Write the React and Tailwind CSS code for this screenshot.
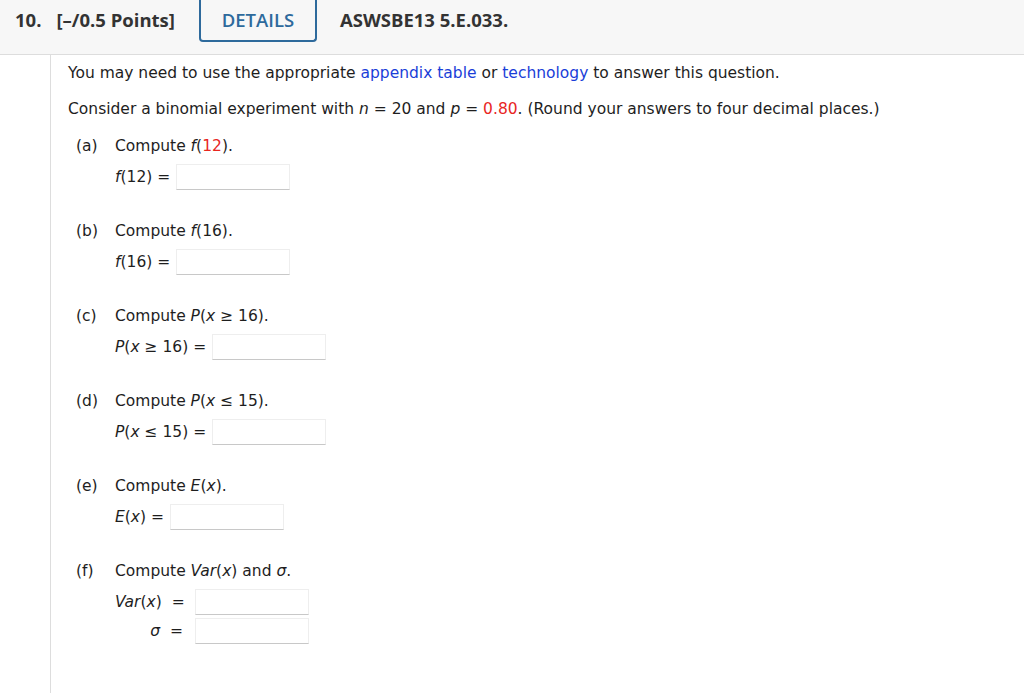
import React from "react";

const parts = [
  {
    key: "a",
    q: (
      <>
        Compute <i>f</i>(<span className="text-[#e8261f]">12</span>).
      </>
    ),
    answers: [{ label: <><i>f</i>(12) =</> }],
  },
  {
    key: "b",
    q: (
      <>
        Compute <i>f</i>(16).
      </>
    ),
    answers: [{ label: <><i>f</i>(16) =</> }],
  },
  {
    key: "c",
    q: (
      <>
        Compute <i>P</i>(<i>x</i> ≥ 16).
      </>
    ),
    answers: [{ label: <><i>P</i>(<i>x</i> ≥ 16) =</> }],
  },
  {
    key: "d",
    q: (
      <>
        Compute <i>P</i>(<i>x</i> ≤ 15).
      </>
    ),
    answers: [{ label: <><i>P</i>(<i>x</i> ≤ 15) =</> }],
  },
  {
    key: "e",
    q: (
      <>
        Compute <i>E</i>(<i>x</i>).
      </>
    ),
    answers: [{ label: <><i>E</i>(<i>x</i>) =</> }],
  },
  {
    key: "f",
    q: (
      <>
        Compute <i>Var</i>(<i>x</i>) and <i>σ</i>.
      </>
    ),
    answers: [
      { label: <><i>Var</i>(<i>x</i>) &nbsp;=</>, fixed: true },
      { label: <><i>σ</i> &nbsp;=</>, fixed: true },
    ],
  },
];

const AnswerBox = () => (
  <div className="w-[114px] h-[26px] bg-white border border-[#eeeeee] border-b-[#c8c8c8]" />
);

const App = () => {
  return (
    <div className="w-[1024px] h-[693px] bg-white overflow-hidden">
      <div className="h-[55px] bg-[#f7f7f7] border-b border-[#dddddd] flex items-start font-['Open_Sans',sans-serif] font-bold text-[18.5px] leading-[28px] text-[#333333]">
        <span className="ml-[15px] mt-[6px]">10.</span>
        <span className="ml-[15px] mt-[6px]">[–/0.5 Points]</span>
        <div className="ml-[24px] w-[118px] h-[43px] -mt-[1px] border-2 border-t-0 border-[#2e6a9c] rounded-b-[4px] flex items-center justify-center pt-[1px] text-[#2e6a9c] font-semibold text-[18.5px]">
          DETAILS
        </div>
        <span className="ml-[23px] mt-[6px]">ASWSBE13 5.E.033.</span>
      </div>
      <div className="flex h-[638px]">
        <div className="w-[51px] border-r border-[#dddddd]" />
        <div className="pl-[17px] pt-[8px] font-['DejaVu_Sans',Verdana,sans-serif] text-[15.5px] text-[#1e1e1e] leading-[20px]">
          <p>
            You may need to use the appropriate{" "}
            <span className="text-[#1a3ed8]">appendix table</span> or{" "}
            <span className="text-[#1a3ed8]">technology</span> to answer this question.
          </p>
          <p className="mt-[16px]">
            Consider a binomial experiment with <i>n</i> = 20 and <i>p</i> ={" "}
            <span className="text-[#e8261f]">0.80</span>. (Round your answers to four decimal places.)
          </p>
          <div className="mt-[17px] flex flex-col gap-[31px]">
            {parts.map((p) => (
              <div key={p.key} className="flex">
                <span className="w-[47px] pl-[8px]">({p.key})</span>
                <div>
                  <p>{p.q}</p>
                  <div className="mt-[8px] flex flex-col gap-[3px]">
                    {p.answers.map((a, i) => (
                      <div key={i} className="flex items-center">
                        <span
                          className={
                            a.fixed
                              ? "w-[80px] text-right whitespace-nowrap pr-[12px]"
                              : "whitespace-nowrap mr-[6px]"
                          }
                        >
                          {a.label}
                        </span>
                        <AnswerBox />
                      </div>
                    ))}
                  </div>
                </div>
              </div>
            ))}
          </div>
        </div>
      </div>
    </div>
  );
};

export default App;
